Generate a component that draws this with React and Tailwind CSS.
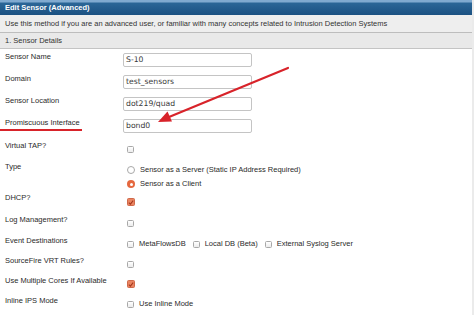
const Box = ({ checked }) =>
  checked ? (
    <span className="w-[8px] h-[8px] rounded-[1.5px] bg-[#e98461] border border-[#d0694a] flex items-center justify-center shrink-0">
      <svg width="7" height="7" viewBox="0 0 7 7">
        <path d="M1 3.6 L2.8 5.4 L6 1.3" fill="none" stroke="#a3361c" strokeWidth="1.2" />
      </svg>
    </span>
  ) : (
    <span className="w-[7px] h-[7px] rounded-[1.5px] border border-[#a8a8a8] bg-[linear-gradient(#ffffff,#ececec)] shrink-0" />
  );

const Radio = ({ on }) =>
  on ? (
    <span className="w-[8px] h-[8px] rounded-full bg-[#e5683f] flex items-center justify-center shrink-0">
      <span className="w-[3px] h-[3px] rounded-full bg-white" />
    </span>
  ) : (
    <span className="w-[8px] h-[8px] rounded-full border border-[#a8a8a8] bg-white shrink-0" />
  );

const Row = ({ label, h, children }) => (
  <div className={`flex ${h}`}>
    <div className="w-[123px] pl-[5px] leading-[12px] shrink-0">{label}</div>
    <div className="flex flex-col pt-[2px]">{children}</div>
  </div>
);

const Item = ({ children }) => (
  <div className="h-[14px] flex items-center gap-[5px] pl-[4px]">{children}</div>
);

const Field = ({ value }) => (
  <div className="w-[129px] h-[14px] border border-[#c4c4c4] rounded-[2px] bg-white pl-[2px] flex items-center text-[7.7px] text-[#3a3a3a] font-['DejaVu_Sans',sans-serif]">
    {value}
  </div>
);

export default function App() {
  return (
    <div className="relative w-[474px] h-[315px] overflow-hidden bg-[#ebebeb] font-['Liberation_Sans',Arial,sans-serif] text-[7.5px] text-[#2a2a2a]">
      <div className="w-[472px] h-full bg-white flex flex-col">
        <div className="h-[15px] leading-[16px] pl-[5px] font-bold text-white bg-[linear-gradient(to_bottom,#80aad0_0px,#80aad0_2px,#2b6697_3px,#1b5182_100%)]">
          Edit Sensor (Advanced)
        </div>
        <div className="h-[18px] leading-[17px] pl-[5px] bg-[#eeeeee] border-b border-[#bdbdbd] text-[#333]">
          Use this method if you are an advanced user, or familiar with many concepts related to Intrusion Detection Systems
        </div>
        <div className="h-[16px] leading-[15px] pl-[5px] bg-[#e9e9e9] border-b border-[#c4c4c4] text-[#333]">
          1. Sensor Details
        </div>

        <div className="pt-[2px] flex flex-col">
          <Row label="Sensor Name" h="h-[22px]"><Field value="S-10" /></Row>
          <Row label="Domain" h="h-[22px]"><Field value="test_sensors" /></Row>
          <Row label="Sensor Location" h="h-[22px]"><Field value="dot219/quad" /></Row>
          <Row label="Promiscuous Interface" h="h-[23px]"><Field value="bond0" /></Row>

          <Row label="Virtual TAP?" h="h-[21px]">
            <Item><Box /></Item>
          </Row>
          <Row label="Type" h="h-[31px]">
            <Item><Radio /><span>Sensor as a Server (Static IP Address Required)</span></Item>
            <Item><Radio on /><span>Sensor as a Client</span></Item>
          </Row>
          <Row label="DHCP?" h="h-[22px]">
            <div className="pt-[1px]"><Item><Box checked /></Item></div>
          </Row>
          <Row label="Log Management?" h="h-[21px]">
            <Item><Box /></Item>
          </Row>
          <Row label="Event Destinations" h="h-[20px]">
            <Item>
              <Box /><span className="mr-[2px]">MetaFlowsDB</span>
              <Box /><span className="mr-[2px]">Local DB (Beta)</span>
              <Box /><span>External Syslog Server</span>
            </Item>
          </Row>
          <Row label="SourceFire VRT Rules?" h="h-[20px]">
            <Item><Box /></Item>
          </Row>
          <Row label="Use Multiple Cores If Available" h="h-[20px]">
            <Item><Box checked /></Item>
          </Row>
          <Row label="Inline IPS Mode" h="h-[20px]">
            <Item><Box /><span>Use Inline Mode</span></Item>
          </Row>
        </div>
      </div>

      {/* red annotation */}
      <div className="absolute left-0 top-[129px] w-[82px] h-[2px] bg-[#d8232a]" />
      <svg className="absolute left-0 top-0 pointer-events-none" width="474" height="315">
        <line x1="288" y1="68" x2="169" y2="117" stroke="#d8232a" strokeWidth="2.2" strokeLinecap="round" />
        <polygon points="158,122 172,121.5 167.5,111.5" fill="#d8232a" />
      </svg>
    </div>
  );
}
